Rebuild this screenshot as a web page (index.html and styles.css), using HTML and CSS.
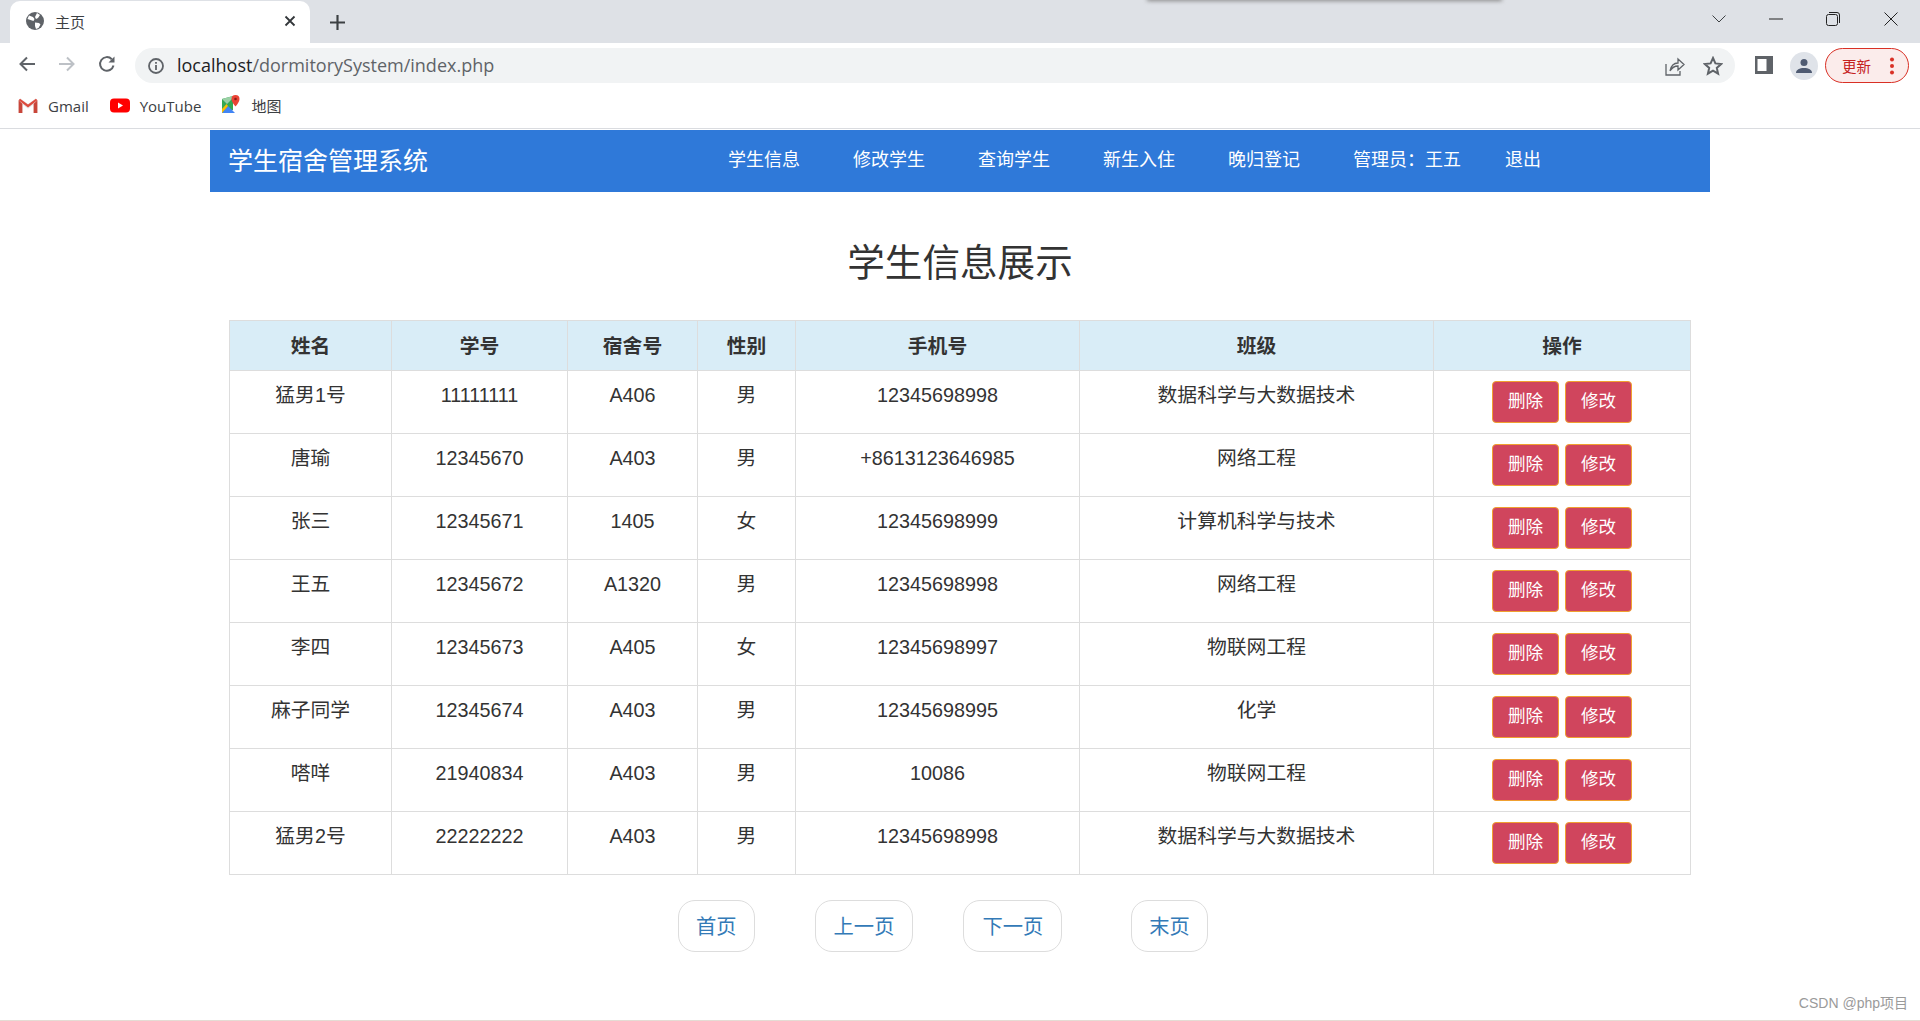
FILE: index.html
```html
<!DOCTYPE html>
<html lang="zh-CN">
<head>
<meta charset="utf-8">
<title>主页</title>
<link rel="stylesheet" href="styles.css">
</head>
<body>
<header class="chrome">
  <div class="tabstrip">
    <div class="tab">
      <svg class="globe" viewBox="0 0 18 18"><circle cx="9" cy="9" r="9" fill="#5f6368"/><path d="M3 3.500l4 1.500 1.500 2-1 2-3-1-3-1zM11 1l3 2-2 3-2 1-1-2 1-2zM9 10.500l4 .5 1.500 1.500-2 3.500-2.500 1-1-3z" fill="#fff"/></svg>
      <span class="tab-title">主页</span>
      <svg class="tab-close" viewBox="0 0 12 12"><path d="M1.500 1.500l9 9M10.500 1.500l-9 9" stroke="#33373a" stroke-width="1.800" fill="none"/></svg>
    </div>
    <svg class="newtab" viewBox="0 0 14 14"><path d="M7 0v14M0 7h14" stroke="#3c4043" stroke-width="2" fill="none"/></svg>
    <div class="winctl">
      <svg class="win-chev" viewBox="0 0 14 8"><path d="M.5 .5L7 7l6.500-6.500" stroke="#3c4043" fill="none"/></svg>
      <svg class="win-min" viewBox="0 0 14 2"><path d="M0 1h14" stroke="#222" stroke-width="1"/></svg>
      <svg class="win-max" viewBox="0 0 14 14"><path d="M3 .5h8a2.500 2.500 0 0 1 2.500 2.500v8" stroke="#222" fill="none"/><rect x=".5" y="2.500" width="11" height="11" rx="2" stroke="#222" fill="none"/></svg>
      <svg class="win-close" viewBox="0 0 14 14"><path d="M.5 .5l13 13M13.500 .5l-13 13" stroke="#222" fill="none"/></svg>
    </div>
  </div>
  <div class="shadow-strip"></div>
  <div class="toolbar">
    <svg class="tool" viewBox="0 0 18 18"><path d="M17 9H3M9 2.500L2.500 9 9 15.500" stroke="#5f6368" stroke-width="2" fill="none"/></svg>
    <svg class="tool" viewBox="0 0 18 18"><path d="M1 9h14M9 2.500L15.500 9 9 15.500" stroke="#bdc1c6" stroke-width="2" fill="none"/></svg>
    <svg class="tool" viewBox="0 0 18 18"><path d="M15.500 10.500A6.800 6.800 0 1 1 13.800 4.200" stroke="#5f6368" stroke-width="2" fill="none"/><path d="M16.500 1.500v6h-6z" fill="#5f6368"/></svg>
    <div class="omnibox">
      <svg class="info" viewBox="0 0 16 16"><circle cx="8" cy="8" r="7" stroke="#5f6368" stroke-width="1.800" fill="none"/><path d="M8 7v5M8 4v1.800" stroke="#5f6368" stroke-width="1.800"/></svg>
      <span class="url"><span class="host">localhost</span>/dormitorySystem/index.php</span>
      <svg class="share" viewBox="0 0 20 20"><path d="M1 8v11h14v-4" stroke="#5f6368" stroke-width="1.300" fill="none"/><path d="M5 15c1-5 4-8 8-8V3l6 5.500-6 5.500v-4c-3 0-6 1.500-8 5z" stroke="#5f6368" stroke-width="1.300" fill="none"/></svg>
      <svg class="star" viewBox="0 0 20 20"><path d="M10 2l2.400 5.400 5.800.6-4.400 3.900 1.300 5.800-5.100-3-5.100 3 1.300-5.800L1.800 8l5.800-.6z" stroke="#5f6368" stroke-width="2" fill="none"/></svg>
    </div>
    <svg class="panel" viewBox="0 0 18 18"><rect width="18" height="18" fill="#5f6368"/><rect x="2.500" y="3" width="9" height="12" fill="#fff"/></svg>
    <div class="avatar"><svg viewBox="0 0 16 16"><circle cx="8" cy="4.500" r="3.500" fill="#4f5b72"/><path d="M0 15c0-3.500 3.500-5 8-5s8 1.500 8 5z" fill="#4f5b72"/></svg></div>
    <div class="update"><span>更新</span><i class="dots"></i></div>
  </div>
  <div class="bookmarks">
    <a class="bm">
      <svg class="bm-icon" viewBox="0 0 20 16"><path d="M0 2v14h4V7l6 4.500L16 7v9h4V2l-2-1.500L10 6.500 2 .5z" fill="#e8e8e8"/><path d="M0 2.500V16h4V6zM20 2.500V16h-4V6z" fill="#c9463a"/><path d="M1.500 .8L10 7l8.500-6.200L20 2.500 10 10 0 2.500z" fill="#dd4b3e"/></svg>
      Gmail
    </a>
    <a class="bm">
      <svg class="bm-icon" viewBox="0 0 20 14"><rect width="20" height="14" rx="4" fill="#f00"/><path d="M8 4l5 3-5 3z" fill="#fff"/></svg>
      YouTube
    </a>
    <a class="bm">
      <svg class="bm-icon maps" viewBox="0 0 18 19"><path d="M0 4l11-3v14L0 18z" fill="#34a853"/><path d="M0 18l6-7 7 7z" fill="#4285f4"/><path d="M0 18l6-7-1.500-2L0 14z" fill="#fbbc04"/><path d="M0 4l5 5 6-6V1z" fill="#9ad0a5"/><path d="M13.500 0a4 4 0 0 0-4 4c0 3 4 7.500 4 7.500s4-4.500 4-7.500a4 4 0 0 0-4-4z" fill="#ea4335"/><circle cx="13.500" cy="4" r="1.300" fill="#8a1c14"/></svg>
      地图
    </a>
  </div>
</header>

<main class="page">
  <nav class="navbar">
    <div class="brand">学生宿舍管理系统</div>
    <ul class="navlinks">
      <li><a>学生信息</a></li>
      <li><a>修改学生</a></li>
      <li><a>查询学生</a></li>
      <li><a>新生入住</a></li>
      <li><a>晚归登记</a></li>
      <li class="admin"><a>管理员&#xFF1A;王五</a></li>
      <li><a>退出</a></li>
    </ul>
  </nav>

  <h1 class="title">学生信息展示</h1>

  <table class="students">
    <colgroup>
      <col class="c1"><col class="c2"><col class="c3"><col class="c4"><col class="c5"><col class="c6"><col class="c7">
    </colgroup>
    <thead>
      <tr><th>姓名</th><th>学号</th><th>宿舍号</th><th>性别</th><th>手机号</th><th>班级</th><th>操作</th></tr>
    </thead>
    <tbody>
      <tr><td>猛男1号</td><td>11111111</td><td>A406</td><td>男</td><td>12345698998</td><td>数据科学与大数据技术</td><td><a class="btn">删除</a><a class="btn">修改</a></td></tr>
      <tr><td>唐瑜</td><td>12345670</td><td>A403</td><td>男</td><td>+8613123646985</td><td>网络工程</td><td><a class="btn">删除</a><a class="btn">修改</a></td></tr>
      <tr><td>张三</td><td>12345671</td><td>1405</td><td>女</td><td>12345698999</td><td>计算机科学与技术</td><td><a class="btn">删除</a><a class="btn">修改</a></td></tr>
      <tr><td>王五</td><td>12345672</td><td>A1320</td><td>男</td><td>12345698998</td><td>网络工程</td><td><a class="btn">删除</a><a class="btn">修改</a></td></tr>
      <tr><td>李四</td><td>12345673</td><td>A405</td><td>女</td><td>12345698997</td><td>物联网工程</td><td><a class="btn">删除</a><a class="btn">修改</a></td></tr>
      <tr><td>麻子同学</td><td>12345674</td><td>A403</td><td>男</td><td>12345698995</td><td>化学</td><td><a class="btn">删除</a><a class="btn">修改</a></td></tr>
      <tr><td>嗒咩</td><td>21940834</td><td>A403</td><td>男</td><td>10086</td><td>物联网工程</td><td><a class="btn">删除</a><a class="btn">修改</a></td></tr>
      <tr><td>猛男2号</td><td>22222222</td><td>A403</td><td>男</td><td>12345698998</td><td>数据科学与大数据技术</td><td><a class="btn">删除</a><a class="btn">修改</a></td></tr>
    </tbody>
  </table>

  <div class="pager">
    <a class="pg">首页</a>
    <a class="pg pg-prev">上一页</a>
    <a class="pg pg-next">下一页</a>
    <a class="pg pg-last">末页</a>
  </div>
</main>
<div class="watermark">CSDN @php项目</div>
</body>
</html>
```

FILE: styles.css
```css
* { box-sizing: border-box; }
html, body { margin: 0; height: 100%; }
body {
  height: 1021px;
  overflow: hidden;
  display: flex;
  flex-direction: column;
  background: #fff;
  color: #333;
  font-family: "Liberation Sans", "Noto Sans CJK SC", sans-serif;
  font-size: 19.8px;
  border-bottom: 1px solid #e4dcd4;
  position: relative;
}
svg { display: block; flex: none; }

/* browser chrome */
.chrome { flex: none; position: relative; }
.tabstrip {
  height: 43px;
  background: #dee1e6;
  display: flex;
  align-items: center;
  padding-left: 10px;
  padding-top: 1px;
}
.tab {
  width: 300px;
  height: 42px;
  align-self: flex-end;
  background: #fff;
  border-radius: 10px 10px 0 0;
  display: flex;
  align-items: center;
  padding: 0 14px 2px 16px;
}
.globe { width: 18px; height: 18px; }
.tab-title { margin-left: 11px; font-size: 15px; color: #3c4043; flex: 1; }
.tab-close { width: 12px; height: 12px; }
.newtab { width: 15px; height: 15px; margin-left: 20px; }
.winctl { margin-left: auto; display: flex; align-items: center; padding: 0 22px 7px 0; }
.win-chev { width: 14px; height: 8px; }
.win-min { width: 14px; height: 2px; margin-left: 43px; }
.win-max { width: 14px; height: 14px; margin-left: 43px; }
.win-close { width: 14px; height: 14px; margin-left: 44px; }
.shadow-strip {
  position: absolute;
  left: 1147px;
  top: -4px;
  width: 355px;
  height: 5px;
  background: #8a8a8a;
  filter: blur(2px);
}

.toolbar {
  height: 42px;
  background: #fff;
  display: flex;
  align-items: center;
  padding-left: 18px;
}
.tool { width: 18px; height: 18px; margin-right: 22px; }
.omnibox {
  width: 1600px;
  height: 35px;
  margin-left: -3px;
  margin-top: 3px;
  border-radius: 18px;
  background: #f1f3f4;
  display: flex;
  align-items: center;
  padding: 0 8px 0 13px;
}
.info { width: 16px; height: 16px; }
.url { margin-left: 13px; margin-top: -2px; font-family: "Open Sans", sans-serif; font-size: 18px; color: #5f6368; flex: 1; }
.host { color: #202124; }
.share { width: 20px; height: 20px; margin-right: 18px; }
.star { width: 20px; height: 20px; margin-right: 4px; }
.panel { width: 18px; height: 18px; margin-left: 20px; margin-top: 1px; }
.avatar {
  width: 28px;
  height: 28px;
  margin-left: 17px;
  margin-top: 3px;
  border-radius: 50%;
  background: #dfe3e9;
  display: flex;
  align-items: center;
  justify-content: center;
}
.avatar svg { width: 16px; height: 16px; }
.update {
  width: 84px;
  height: 35px;
  margin-left: 7px;
  margin-top: 3px;
  border: 1.5px solid #d93025;
  border-radius: 18px;
  background: #fbeceb;
  color: #c5221f;
  font-size: 14.5px;
  display: flex;
  align-items: center;
  padding-left: 16px;
}
.dots {
  margin-left: 19px;
  width: 4px;
  height: 4px;
  border-radius: 50%;
  background: #d93025;
  box-shadow: 0 -6.500px 0 #d93025, 0 6.500px 0 #d93025;
}

.bookmarks {
  height: 44px;
  border-bottom: 1px solid #dadce0;
  background: #fff;
  display: flex;
  align-items: center;
  padding: 0 0 2px 18px;
  font-family: "Open Sans", "Noto Sans CJK SC", sans-serif;
  font-size: 15px;
  color: #3c4043;
}
.bm { display: flex; align-items: center; margin-right: 21px; }
.bm-icon { width: 20px; height: 15px; margin-right: 10px; }
.maps { width: 18px; height: 19px; margin-bottom: 2px; margin-right: 11px; }

/* page */
.page {
  flex: 1;
  width: 1500px;
  margin: 0 auto;
}
.navbar {
  height: 62px;
  margin-top: 1px;
  background: #2f79d9;
  color: #fff;
  display: flex;
  align-items: center;
  padding: 0 0 4px 18px;
}
.brand { font-size: 25px; width: 500px; }
.navlinks {
  list-style: none;
  margin: 0;
  padding: 0 0 2px;
  display: flex;
  gap: 53px;
  font-size: 18px;
}
.admin { margin-right: -9px; }
.title {
  height: 128px;
  margin: 0;
  padding-top: 6px;
  display: flex;
  align-items: center;
  justify-content: center;
  font-size: 37.6px;
  font-weight: 400;
  color: #333;
}
.students {
  width: 1461px;
  margin: 0 0 0 19px;
  table-layout: fixed;
  border-collapse: collapse;
}
.c1 { width: 162px; }
.c2 { width: 176px; }
.c3 { width: 130px; }
.c4 { width: 98px; }
.c5 { width: 284px; }
.c6 { width: 354px; }
.c7 { width: 257px; }
.students th, .students td {
  border: 1px solid #ddd;
  text-align: center;
  vertical-align: top;
}
.students th {
  height: 50px;
  padding-bottom: 4px;
  background: #d9edf7;
  font-weight: 700;
  vertical-align: middle;
}
.students td {
  height: 63px;
  padding: 10px 0;
  line-height: 29px;
}
.btn {
  display: inline-block;
  vertical-align: top;
  width: 67px;
  height: 42px;
  line-height: 38px;
  font-size: 17.6px;
  text-align: center;
  background: #d0455d;
  color: #fff;
  border: 1px solid #f0a030;
  border-radius: 4px;
}
.btn + .btn { margin-left: 6px; }
.pager {
  display: flex;
  justify-content: flex-start;
  margin-top: 25px;
  padding-left: 468px;
}
.pg {
  height: 52px;
  padding: 0 17px 3px;
  display: flex;
  align-items: center;
  font-size: 20.3px;
  color: #337ab7;
  border: 1px solid #ddd;
  border-radius: 17px;
}
.pg-prev, .pg-next { padding-left: 18px; padding-right: 18px; }
.pg-prev { margin-left: 60px; }
.pg-next { margin-left: 50px; }
.pg-last { margin-left: 69px; }
.watermark {
  position: absolute;
  right: 12px;
  bottom: 8px;
  font-size: 14px;
  color: #9a9a9a;
}
```
